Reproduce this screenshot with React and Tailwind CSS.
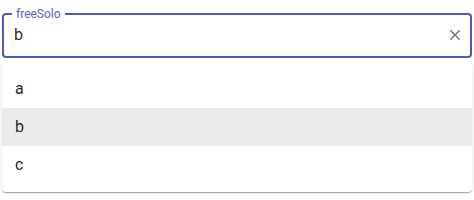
export default function App() {
  return (
    <div className="w-[474px] h-[200px] bg-white" style={{ fontFamily: 'Roboto, "Liberation Sans", sans-serif' }}>
      <div className="pt-[13px] px-[2px]">
        <div className="relative h-[45px] rounded-[4px] border-2 border-[#4d5bb8] flex items-center pl-[10px] pr-[6px]">
          <span className="absolute -top-[9px] left-[8px] bg-white px-[4px] text-[12px] leading-[16px] text-[#5866bd]">freeSolo</span>
          <span className="flex-1 text-[16px] leading-[20px] text-[rgba(0,0,0,0.87)] -mt-[2px]">b</span>
          <svg width="18" height="18" viewBox="0 0 24 24" className="fill-[rgba(0,0,0,0.54)] -mt-[2px]">
            <path d="M19 6.41L17.59 5 12 10.59 6.41 5 5 6.41 10.59 12 5 17.59 6.41 19 12 13.41 17.59 19 19 17.59 13.41 12z" />
          </svg>
        </div>
        <div className="mt-[3px] rounded-[4px] bg-white py-[8px] shadow-[0_2px_1px_-1px_rgba(0,0,0,0.2),0_1px_1px_0_rgba(0,0,0,0.14),0_1px_3px_0_rgba(0,0,0,0.12)]">
          <div className="h-[39px] flex items-center pl-[13px] text-[16px] text-[rgba(0,0,0,0.87)]">a</div>
          <div className="h-[38px] flex items-center pl-[13px] text-[16px] text-[rgba(0,0,0,0.87)] bg-[#ebebeb]">b</div>
          <div className="h-[38px] flex items-center pl-[13px] text-[16px] text-[rgba(0,0,0,0.87)]">c</div>
        </div>
      </div>
    </div>
  );
}
